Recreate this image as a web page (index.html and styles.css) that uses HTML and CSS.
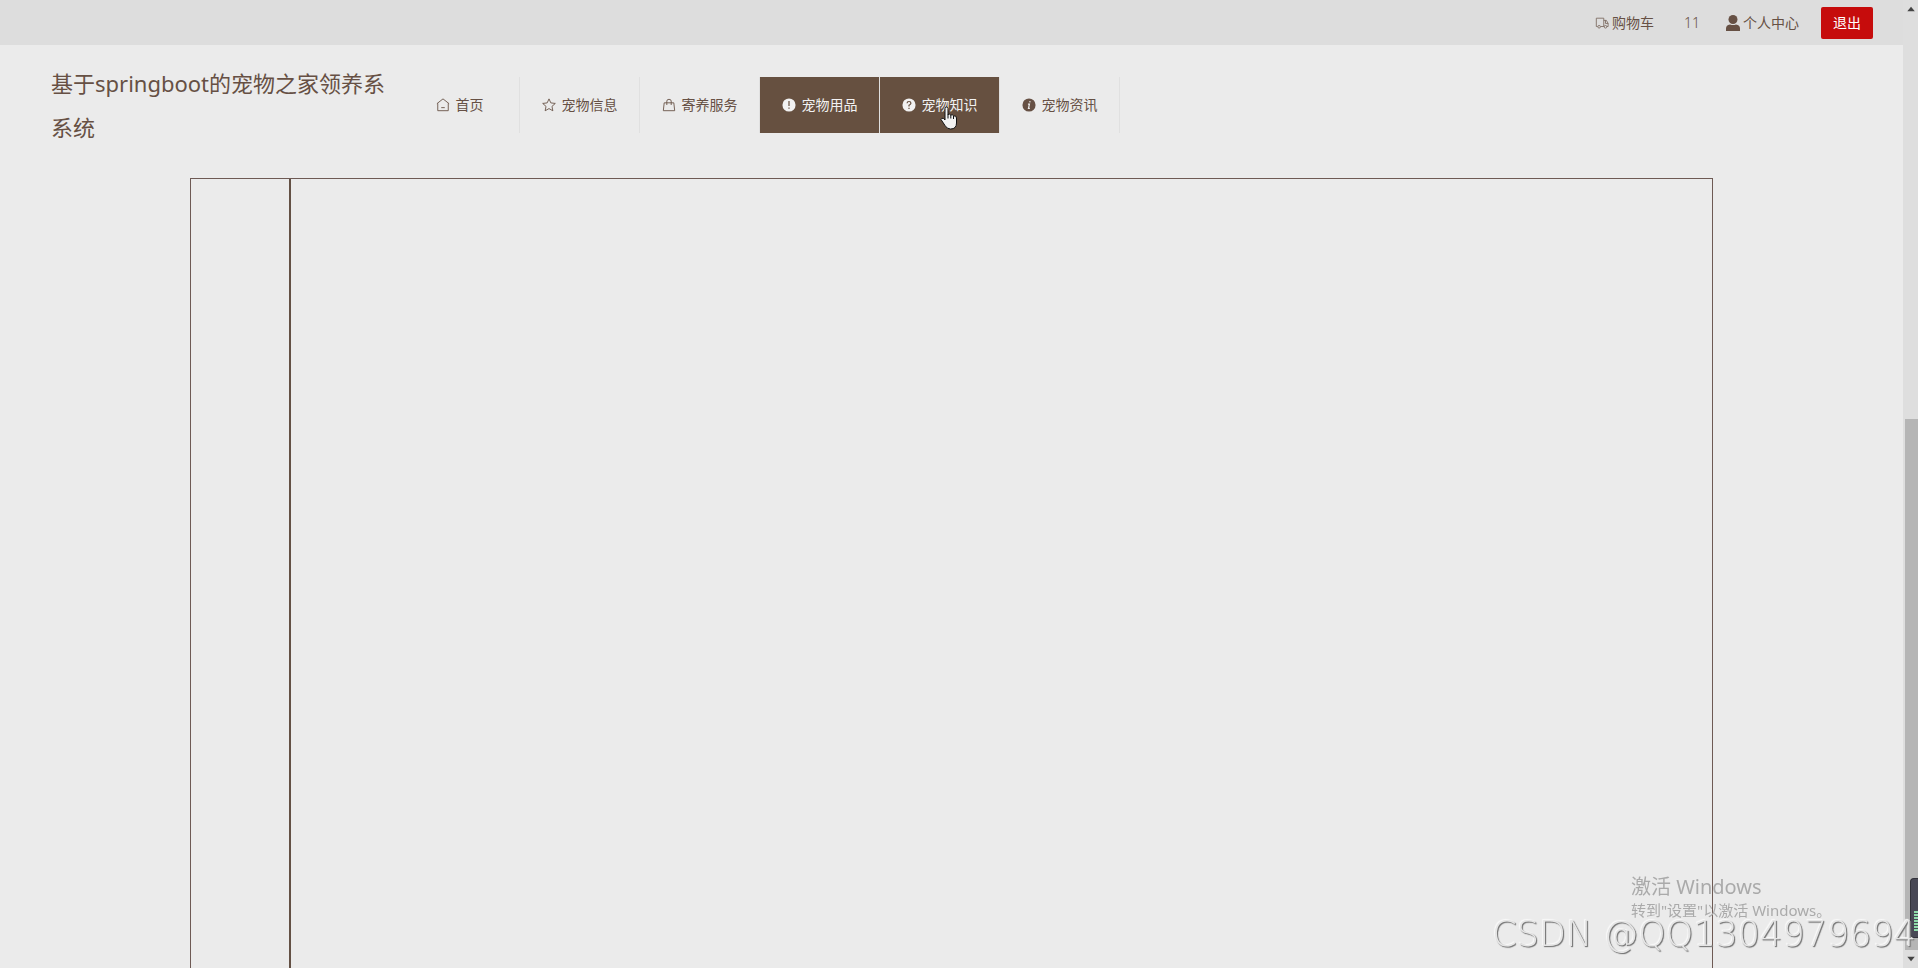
FILE: index.html
```
<!DOCTYPE html>
<html lang="zh-CN">
<head>
    <meta charset="UTF-8">
    <meta name="viewport" content="width=device-width, initial-scale=1.0">
    <title>基于springboot的宠物之家领养系系统</title>
    <link rel="stylesheet" href="styles.css">
</head>
<body>
    <div class="page">
        <div class="topbar">
            <a class="top-link cart" href="#">
                <svg class="icon" viewBox="0 0 16 16" fill="none" stroke="currentColor">
                    <path d="M3 12H1.500V2.500H10V12H6.500M10 5H13L15 8.500V12H13.500M10 12H10.500"/>
                    <circle cx="4.700" cy="12.300" r="1.500"/>
                    <circle cx="12" cy="12.300" r="1.500"/>
                    <path d="M12 5V8.500H15"/>
                </svg>
                <span>购物车</span>
            </a>
            <span class="user-name">11</span>
            <a class="top-link user" href="#">
                <svg class="user-icon" viewBox="0 0 14 16" fill="currentColor">
                    <circle cx="7" cy="4.500" r="4.500"/>
                    <path d="M0 16V13.500Q0 10 4 9.400Q7 10.800 10 9.400Q14 10 14 13.500V16Z"/>
                </svg>
                <span>个人中心</span>
            </a>
            <button class="logout-btn" type="button">退出</button>
        </div>

        <header class="header">
            <h1 class="title">基于springboot的宠物之家领养系系统</h1>
            <nav class="nav">
                <a class="nav-item" href="#">
                    <svg class="icon" viewBox="0 0 16 16" fill="none" stroke="currentColor">
                        <path d="M1 6.500L8 1L15 6.500M2 6V14.500H14V6M6 11H10"/>
                    </svg>
                    <span>首页</span>
                </a>
                <a class="nav-item" href="#">
                    <svg class="icon" viewBox="0 0 16 16" fill="none" stroke="currentColor" stroke-linejoin="round">
                        <path d="M8 1L10.100 5.600L15.200 6.200L11.400 9.600L12.400 14.600L8 12.100L3.600 14.600L4.600 9.600L0.800 6.200L5.900 5.600Z"/>
                    </svg>
                    <span>宠物信息</span>
                </a>
                <a class="nav-item" href="#">
                    <svg class="icon" viewBox="0 0 16 16" fill="none" stroke="currentColor">
                        <path d="M2.500 5.500H13.500L14.500 14.500H1.500ZM5.500 8V3.500Q5.500 1.500 8 1.500T10.500 3.500V8"/>
                    </svg>
                    <span>寄养服务</span>
                </a>
                <a class="nav-item active" href="#">
                    <svg class="icon" viewBox="0 0 16 16">
                        <circle cx="8" cy="8" r="7.500" fill="currentColor"/>
                        <path class="mark" d="M8 3.500V9M8 10.800V12.200"/>
                    </svg>
                    <span>宠物用品</span>
                </a>
                <a class="nav-item active" href="#">
                    <svg class="icon" viewBox="0 0 16 16">
                        <circle cx="8" cy="8" r="7.500" fill="currentColor"/>
                        <path class="mark" d="M5.800 6Q5.800 4 8 4T10.200 6Q10.200 7.200 8 8.300V9.800M8 11.200V12.500"/>
                    </svg>
                    <span>宠物知识</span>
                    <svg class="cursor" viewBox="0 0 18 24">
                        <path d="M5 2.500Q5 1 6.500 1T8 2.500V8.500Q9.500 7.500 10.800 9Q12.500 8.200 13.500 9.800Q16.500 9.500 16.500 12V17Q16.500 23 10.500 23Q7 23 5 19.500L1 13.500Q1.500 11.500 3.500 12.500L5 14Z" fill="#f2f2f2" stroke="#111"/>
                        <path d="M8 8V12.500M10.800 9V12.500M13.500 9.800V13" fill="none" stroke="#111"/>
                    </svg>
                </a>
                <a class="nav-item" href="#">
                    <svg class="icon" viewBox="0 0 16 16">
                        <circle cx="8" cy="8" r="7.500" fill="currentColor"/>
                        <path class="mark light" d="M9.200 3.500L8.900 5M6.800 7H8.500L7.400 11.800H9"/>
                    </svg>
                    <span>宠物资讯</span>
                </a>
            </nav>
        </header>

        <main class="board">
            <aside class="board-side"></aside>
            <section class="board-body"></section>
        </main>
    </div>

    <div class="scrollbar">
        <svg class="arrow" viewBox="0 0 14 14"><path d="M4 9L7.500 5L11 9Z"/></svg>
        <div class="track"><div class="thumb"></div></div>
        <svg class="arrow" viewBox="0 0 14 14"><path d="M4 5L7.500 9L11 5Z"/></svg>
    </div>

    <div class="meter"><div class="meter-level"></div></div>

    <div class="activate">
        <p class="activate-title">激活 Windows</p>
        <p class="activate-text">转到"设置"以激活 Windows。</p>
    </div>
    <div class="watermark">CSDN @QQ1304979694</div>
</body>
</html>
```
FILE: styles.css
```
* {
    margin: 0;
    padding: 0;
    box-sizing: border-box;
}

body {
    display: flex;
    height: 100vh;
    overflow: hidden;
    background: #ebebeb;
    color: #665044;
    font-family: "Noto Sans", "Noto Sans CJK SC", sans-serif;
    font-size: 14px;
    line-height: 20px;
}

a {
    color: inherit;
    text-decoration: none;
}

.page {
    flex: 1;
    display: flex;
    flex-direction: column;
    min-width: 0;
}

/* top bar */
.topbar {
    display: flex;
    align-items: center;
    justify-content: flex-end;
    padding: 7px 30px 6px;
    background: #ddd;
}

.top-link {
    display: flex;
    align-items: center;
    gap: 3px;
}

.icon {
    width: 14px;
    height: 14px;
    flex: none;
}

.cart .icon {
    opacity: 0.8;
}

.user-icon {
    width: 14px;
    height: 16px;
}

.user-name {
    margin: 0 26px 0 30px;
    font-weight: 300;
}

.logout-btn {
    margin-left: 22px;
    width: 52px;
    height: 32px;
    border: none;
    border-radius: 2px;
    background: #c60c0c;
    color: #fff;
    font: inherit;
    cursor: pointer;
}

/* header */
.header {
    display: flex;
    align-items: center;
    padding: 16px 51px;
}

.title {
    width: 349px;
    font-size: 22px;
    font-weight: 400;
    line-height: 44px;
}

.nav {
    display: flex;
}

.nav-item {
    position: relative;
    display: flex;
    align-items: center;
    justify-content: center;
    gap: 6px;
    min-width: 120px;
    height: 56px;
    border-right: 1px solid #e0e0e0;
}

.nav-item.active {
    background: #665040;
    background-clip: padding-box;
    color: #f2f2f2;
}

.mark {
    fill: none;
    stroke: #665040;
    stroke-width: 1.4;
}

.mark.light {
    stroke: #ebebeb;
}

.cursor {
    position: absolute;
    left: 60px;
    top: 29px;
    width: 18px;
    height: 24px;
}

/* content */
.board {
    flex: 1;
    display: flex;
    width: 80%;
    margin: 13px auto 0;
    border: 1px solid #6e5a54;
    border-bottom: none;
}

.board-side {
    width: 100px;
    border-right: 2px solid #635044;
}

.board-body {
    flex: 1;
}

/* scrollbar */
.scrollbar {
    display: flex;
    flex-direction: column;
    width: 15px;
    background: #dedede;
}

.arrow {
    width: 15px;
    height: 18px;
    fill: #444;
}

.track {
    flex: 1;
    display: flex;
    align-items: flex-end;
    padding-left: 2px;
}

.thumb {
    width: 100%;
    height: 57%;
    background: #b5b5b5;
}

/* desktop overlays */
.meter {
    position: fixed;
    right: 0;
    bottom: 30px;
    display: flex;
    align-items: flex-end;
    width: 8px;
    height: 60px;
    padding: 4px 0 6px 3px;
    border: 1px solid #33333b;
    border-right: none;
    border-radius: 4px 0 0 4px;
    background: #484855;
}

.meter-level {
    width: 100%;
    height: 20px;
    background: repeating-linear-gradient(#8fdcaa 0 2px, #484855 2px 3px);
}

.activate {
    position: fixed;
    right: 91px;
    bottom: 48px;
    width: 196px;
    color: #aaa;
    white-space: nowrap;
}

.activate-title {
    font-size: 20px;
    line-height: 26px;
}

.activate-text {
    font-size: 15px;
    line-height: 20px;
}

.watermark {
    position: fixed;
    right: 2px;
    bottom: 14px;
    color: #e6e6e6;
    font-family: "DejaVu Sans", sans-serif;
    font-size: 35px;
    font-weight: 200;
    line-height: 40px;
    text-shadow: 1px 1px 1px #777, 1px 1px 1px #999, -1px -1px 1px #fafafa;
}
```
